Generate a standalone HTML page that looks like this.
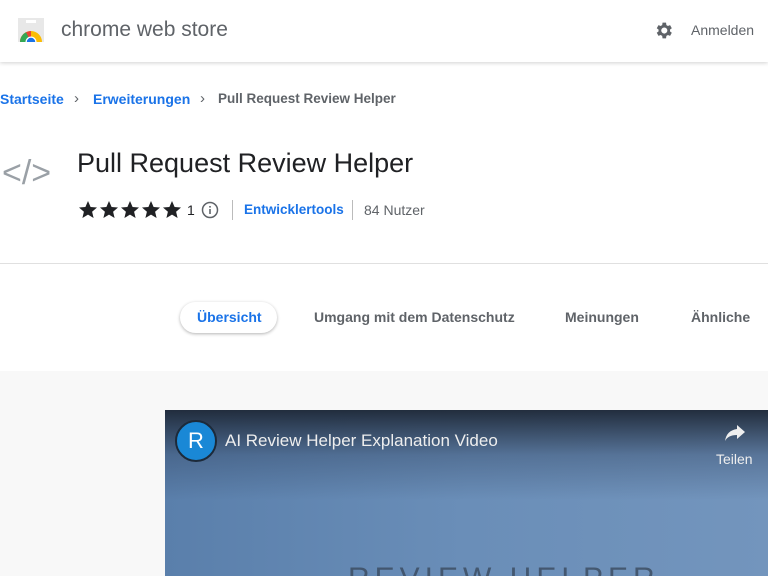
<!DOCTYPE html>
<html><head><meta charset="utf-8"><style>
*{margin:0;padding:0;box-sizing:border-box}
html,body{width:768px;height:576px;overflow:hidden}
body{background:#fff;font-family:"Liberation Sans",sans-serif;position:relative}
.hdr{position:absolute;left:0;top:0;width:768px;height:62px;background:#fff;box-shadow:0 1px 4px rgba(0,0,0,.18);z-index:2}
.abs{position:absolute;white-space:nowrap}
</style></head><body>
<div class="hdr">
  <svg class="abs" style="left:18px;top:18px" width="26" height="26" viewBox="0 0 26 26">
    <rect x="0" y="0" width="26" height="24" fill="#e8e8e8"/>
    <rect x="8" y="2" width="10" height="3" fill="#fff"/>
    <path d="M2 24 A11 11 0 0 1 24 24 Z" fill="#fbbc04"/>
    <path d="M2 24 A11 11 0 0 1 13 13 L13 24 Z" fill="#ea4335"/>
    <path d="M2 24 A11 11 0 0 1 8 14.3 L13 24 Z" fill="#34a853"/>
    <circle cx="13" cy="24" r="5.5" fill="#fff"/>
    <circle cx="13" cy="24" r="4.2" fill="#1a73e8"/>
    <rect x="0" y="24" width="26" height="2" fill="#fff"/>
  </svg>
  <div class="abs" style="left:61px;top:18px;font-size:21px;color:#5f6368">chrome web store</div>
  <svg class="abs" style="left:653px;top:20px" width="21" height="21" viewBox="0 0 24 24"><path fill="#5f6368" d="M19.4 13a7.5 7.5 0 0 0 0-2l2.1-1.6-2-3.5-2.5 1a7.3 7.3 0 0 0-1.7-1L14.9 3h-4l-.4 2.9a7.3 7.3 0 0 0-1.7 1l-2.5-1-2 3.5L6.4 11a7.5 7.5 0 0 0 0 2l-2.1 1.6 2 3.5 2.5-1c.5.4 1.1.7 1.7 1l.4 2.9h4l.4-2.9c.6-.3 1.2-.6 1.7-1l2.5 1 2-3.5zM12.9 15.5a3.5 3.5 0 1 1 0-7 3.5 3.5 0 0 1 0 7z"/></svg>
  <div class="abs" style="left:691px;top:22px;font-size:14px;color:#5f6368">Anmelden</div>
</div>
<div class="abs" style="left:0;top:91px;font-size:14px;color:#1a73e8;font-weight:bold">Startseite</div>
<div class="abs" style="left:74px;top:90px;font-size:15px;color:#5f6368">›</div>
<div class="abs" style="left:93px;top:91px;font-size:14px;color:#1a73e8;font-weight:bold">Erweiterungen</div>
<div class="abs" style="left:200px;top:90px;font-size:15px;color:#5f6368">›</div>
<div class="abs" style="left:218px;top:91px;font-size:13.5px;color:#5f6368;font-weight:bold">Pull Request Review Helper</div>
<div class="abs" style="left:2px;top:154px;font-size:34px;color:#9aa0a6;font-weight:300">&lt;/&gt;</div>
<div class="abs" style="left:77px;top:148px;font-size:27px;color:#202124">Pull Request Review Helper</div>
<svg class="abs" style="left:78px;top:200px" width="104" height="20" viewBox="0 0 104 20">
  <defs><path id="s" d="M10 1 L12.6 7 L19 7.5 L14.1 11.7 L15.6 18 L10 14.6 L4.4 18 L5.9 11.7 L1 7.5 L7.4 7 Z" fill="#202124"/></defs>
  <use href="#s" x="0"/><use href="#s" x="21"/><use href="#s" x="42"/><use href="#s" x="63"/><use href="#s" x="84"/>
</svg>
<div class="abs" style="left:187px;top:202px;font-size:14px;color:#202124">1</div>
<svg class="abs" style="left:201px;top:201px" width="18" height="18" viewBox="0 0 18 18"><circle cx="9" cy="9" r="7.5" fill="none" stroke="#5f6368" stroke-width="1.5"/><rect x="8.2" y="8" width="1.6" height="5" fill="#5f6368"/><rect x="8.2" y="5" width="1.6" height="1.6" fill="#5f6368"/></svg>
<div class="abs" style="left:232px;top:200px;width:1px;height:20px;background:#bbb"></div>
<div class="abs" style="left:244px;top:202px;font-size:13.5px;color:#1a73e8;font-weight:bold">Entwicklertools</div>
<div class="abs" style="left:352px;top:200px;width:1px;height:20px;background:#bbb"></div>
<div class="abs" style="left:364px;top:202px;font-size:14px;color:#5f6368">84 Nutzer</div>
<div class="abs" style="left:0;top:263px;width:768px;height:1px;background:#e0e0e0"></div>
<div class="abs" style="left:180px;top:302px;width:97px;height:31px;border-radius:16px;background:#fff;box-shadow:0 1px 3px rgba(0,0,0,.3)"></div>
<div class="abs" style="left:197px;top:309px;font-size:14px;color:#1a73e8;font-weight:bold">Übersicht</div>
<div class="abs" style="left:314px;top:309px;font-size:14px;color:#5f6368;font-weight:bold">Umgang mit dem Datenschutz</div>
<div class="abs" style="left:565px;top:309px;font-size:14px;color:#5f6368;font-weight:bold">Meinungen</div>
<div class="abs" style="left:691px;top:309px;font-size:14px;color:#5f6368;font-weight:bold">Ähnliche</div>
<div class="abs" style="left:0;top:371px;width:768px;height:205px;background:#f8f8f8"></div>
<div class="abs" style="left:165px;top:410px;width:603px;height:166px;overflow:hidden;background:linear-gradient(to right,#5a7fab,#6a8eb8 50%,#7395bd)">
  <div class="abs" style="left:0;top:0;width:603px;height:90px;background:linear-gradient(to bottom,rgba(30,40,55,.95),rgba(50,70,100,.4) 50%,rgba(0,0,0,0))"></div>
  <div class="abs" style="left:10px;top:10px;width:42px;height:42px;border-radius:50%;background:#1a88d6;border:2px solid #1c2a3a;color:#fff;font-size:22px;text-align:center;line-height:38px">R</div>
  <div class="abs" style="left:60px;top:21px;font-size:17px;color:#eee">AI Review Helper Explanation Video</div>
  <svg class="abs" style="left:559px;top:13px" width="22" height="20" viewBox="0 0 22 20"><path d="M13 2 L21 9 L13 16 L13 12 C7 12 3 14 1 18 C2 11 6 7 13 6 Z" fill="#eee"/></svg>
  <div class="abs" style="left:551px;top:41px;font-size:14px;color:#eee">Teilen</div>
  <div class="abs" style="left:183px;top:152px;font-size:30px;color:#3a4a5e;letter-spacing:5px;opacity:.8">REVIEW HELPER</div>
</div>
</body></html>
